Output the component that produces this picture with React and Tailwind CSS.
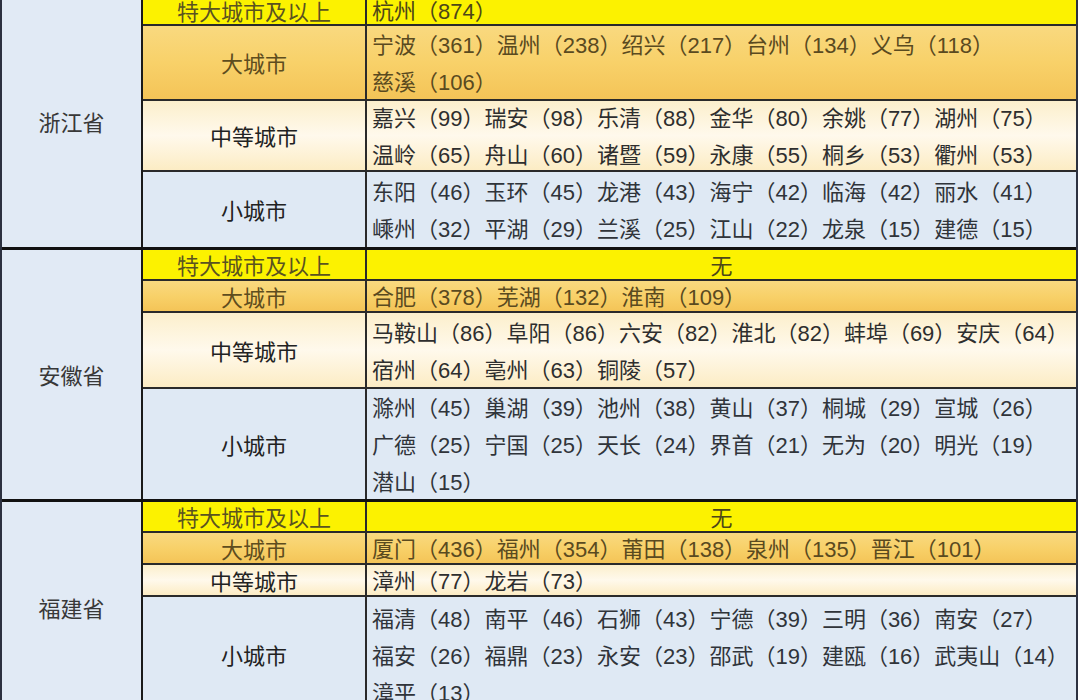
const DATA = [
  {
    province: '浙江省',
    rows: [
      { cat: '特大城市及以上', h: 'h-[30px]', tone: 'mega', lines: ['杭州（874）'] },
      {
        cat: '大城市',
        h: 'h-[75px]',
        tone: 'large',
        lines: ['宁波（361）温州（238）绍兴（217）台州（134）义乌（118）', '慈溪（106）'],
      },
      {
        cat: '中等城市',
        h: 'h-[71px]',
        tone: 'medium',
        lines: [
          '嘉兴（99）瑞安（98）乐清（88）金华（80）余姚（77）湖州（75）',
          '温岭（65）舟山（60）诸暨（59）永康（55）桐乡（53）衢州（53）',
        ],
      },
      {
        cat: '小城市',
        h: 'h-[75px]',
        tone: 'small',
        lines: [
          '东阳（46）玉环（45）龙港（43）海宁（42）临海（42）丽水（41）',
          '嵊州（32）平湖（29）兰溪（25）江山（22）龙泉（15）建德（15）',
        ],
      },
    ],
  },
  {
    province: '安徽省',
    rows: [
      { cat: '特大城市及以上', h: 'h-[31px]', tone: 'mega', lines: ['无'], center: true },
      { cat: '大城市', h: 'h-[32px]', tone: 'large', lines: ['合肥（378）芜湖（132）淮南（109）'] },
      {
        cat: '中等城市',
        h: 'h-[76px]',
        tone: 'medium',
        lines: ['马鞍山（86）阜阳（86）六安（82）淮北（82）蚌埠（69）安庆（64）', '宿州（64）亳州（63）铜陵（57）'],
      },
      {
        cat: '小城市',
        h: 'h-[110px]',
        tone: 'small',
        lines: [
          '滁州（45）巢湖（39）池州（38）黄山（37）桐城（29）宣城（26）',
          '广德（25）宁国（25）天长（24）界首（21）无为（20）明光（19）',
          '潜山（15）',
        ],
      },
    ],
  },
  {
    province: '福建省',
    rows: [
      { cat: '特大城市及以上', h: 'h-[31px]', tone: 'mega', lines: ['无'], center: true },
      { cat: '大城市', h: 'h-[32px]', tone: 'large', lines: ['厦门（436）福州（354）莆田（138）泉州（135）晋江（101）'] },
      { cat: '中等城市', h: 'h-[32px]', tone: 'medium', lines: ['漳州（77）龙岩（73）'] },
      {
        cat: '小城市',
        h: 'h-[115px]',
        tone: 'small',
        lines: [
          '福清（48）南平（46）石狮（43）宁德（39）三明（36）南安（27）',
          '福安（26）福鼎（23）永安（23）邵武（19）建瓯（16）武夷山（14）',
          '漳平（13）',
        ],
      },
    ],
  },
];

// full class strings per row colour
const TONES = {
  mega: { bg: 'bg-[#fcf200]', cat: 'text-[#5a5320]', body: 'text-[#4d4718]' },
  large: {
    bg: 'bg-gradient-to-b from-[#f9d97f] via-[#f8d169] to-[#f4c457]',
    cat: 'text-[#5e4d1e]',
    body: 'text-[#5a4a1f]',
  },
  medium: {
    bg: 'bg-gradient-to-b from-[#fcefcc] via-[#fff9ec] to-[#fcecc4]',
    cat: 'text-[#222222]',
    body: 'text-[#2e2e2e]',
  },
  small: { bg: 'bg-[#dfe9f4]', cat: 'text-[#222222]', body: 'text-[#30343a]' },
};

function CategoryRow({ row, last }) {
  const tone = TONES[row.tone];
  return (
    <div className={`flex ${row.h} ${tone.bg} ${last ? '' : 'border-b-2 border-[#2a2a2a]'}`}>
      <div
        className={`w-[224px] shrink-0 flex items-center justify-center border-r-2 border-[#2a2a2a] ${tone.cat}`}
      >
        {row.cat}
      </div>
      <div
        className={`flex-1 flex flex-col justify-center pt-[3px] leading-[37px] whitespace-nowrap font-['Liberation_Sans','Noto_Sans_CJK_SC',sans-serif] ${
          row.center ? 'items-center' : 'items-start pl-[5px]'
        } ${tone.body}`}
      >
        {row.lines.map((l, i) => (
          <div key={i}>{l}</div>
        ))}
      </div>
    </div>
  );
}

function ProvinceBlock({ block, first }) {
  return (
    <div className={`flex border-b-[3px] border-[#111111] ${first ? '-mt-[4px]' : ''}`}>
      <div className="w-[141px] shrink-0 flex items-center justify-center bg-[#e1eaf5] text-[#383838] border-r-2 border-[#1a1a1a]">
        {block.province}
      </div>
      <div className="flex-1 flex flex-col">
        {block.rows.map((r, i) => (
          <CategoryRow key={i} row={r} last={i === block.rows.length - 1} />
        ))}
      </div>
    </div>
  );
}

export default function App() {
  return (
    <div className="w-[1080px] h-[700px] overflow-hidden bg-white font-['Noto_Sans_CJK_SC','Liberation_Sans',sans-serif] text-[22px]">
      <div className="w-[1078px] border-l-2 border-r-2 border-[#2c3140]">
        {DATA.map((b, i) => (
          <ProvinceBlock key={b.province} block={b} first={i === 0} />
        ))}
      </div>
    </div>
  );
}
